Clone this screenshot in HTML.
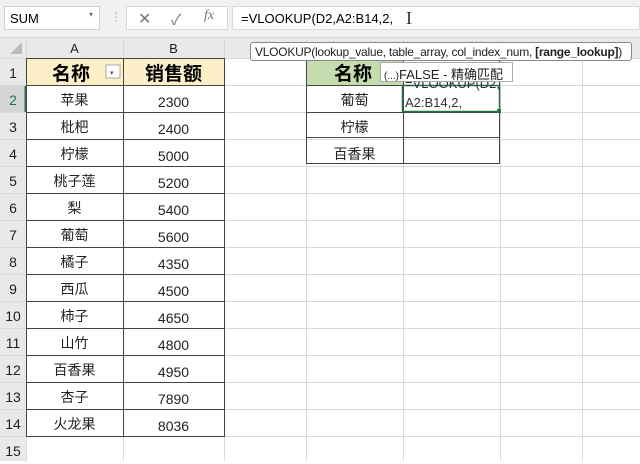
<!DOCTYPE html><html><head><style>
body{margin:0;width:640px;height:461px;overflow:hidden;background:#fff;font-family:"Liberation Sans","Noto Sans CJK SC",sans-serif;position:relative}
.a{position:absolute;box-sizing:border-box}
.c{position:absolute;box-sizing:border-box;display:flex;align-items:center;justify-content:center;font-size:14px;color:#222}
</style></head><body>
<div class="a" style="left:0;top:0;width:640px;height:38px;background:#f1f1f1;border-bottom:1px solid #d6d6d6"></div>
<div class="a" style="left:4px;top:6px;width:96px;height:24px;background:#fff;border:1px solid #d0d0d0;font-size:13px;padding:4px 5px">SUM<span style="position:absolute;right:6px;top:3px;font-size:8px;color:#777">▾</span></div>
<div class="a" style="left:110px;top:10px;color:#aaa;font-size:12px">⋮</div>
<div class="a" style="left:126px;top:6px;width:102px;height:24px;background:#fff;border:1px solid #d8d8d8"></div>
<div class="a" style="left:138px;top:9px;color:#777;font-size:16px">✕</div>
<div class="a" style="left:171px;top:9px;color:#777;font-size:15px">✓</div>
<div class="a" style="left:204px;top:8px;color:#777;font-size:14px;font-style:italic;font-family:'Liberation Serif',serif">fx</div>
<div class="a" style="left:232px;top:6px;width:408px;height:24px;background:#fff;border:1px solid #d8d8d8;font-size:13px;padding:4px 8px">=VLOOKUP(D2,A2:B14,2,</div>
<div class="a" style="left:406px;top:8px;font-size:18px;color:#333;font-family:'Liberation Serif',serif">I</div>
<svg class="a" style="left:0;top:38px" width="640" height="423">
<rect x="0" y="0" width="640" height="20" fill="#e9e9e9"/>
<rect x="0" y="0" width="26" height="423" fill="#e9e9e9"/>
<polygon points="22,4 22,16 10,16" fill="#bbb"/>
<g stroke="#d9d9d9" stroke-width="1">
<line x1="26.5" y1="0" x2="26.5" y2="423"/><line x1="123.5" y1="0" x2="123.5" y2="423"/><line x1="224.5" y1="0" x2="224.5" y2="423"/><line x1="306.5" y1="0" x2="306.5" y2="423"/><line x1="403.5" y1="0" x2="403.5" y2="423"/><line x1="500.5" y1="0" x2="500.5" y2="423"/><line x1="582.5" y1="0" x2="582.5" y2="423"/>
<line x1="0" y1="20.5" x2="640" y2="20.5"/>
<line x1="0" y1="47.5" x2="640" y2="47.5"/><line x1="0" y1="74.5" x2="640" y2="74.5"/><line x1="0" y1="101.5" x2="640" y2="101.5"/><line x1="0" y1="128.5" x2="640" y2="128.5"/><line x1="0" y1="155.5" x2="640" y2="155.5"/><line x1="0" y1="182.5" x2="640" y2="182.5"/><line x1="0" y1="209.5" x2="640" y2="209.5"/><line x1="0" y1="236.5" x2="640" y2="236.5"/><line x1="0" y1="263.5" x2="640" y2="263.5"/><line x1="0" y1="290.5" x2="640" y2="290.5"/><line x1="0" y1="317.5" x2="640" y2="317.5"/><line x1="0" y1="344.5" x2="640" y2="344.5"/><line x1="0" y1="371.5" x2="640" y2="371.5"/><line x1="0" y1="398.5" x2="640" y2="398.5"/>
</g>
<rect x="27" y="21" width="197" height="26" fill="#fdf0c8"/>
<rect x="307" y="21" width="96" height="26" fill="#c5dcae"/>
<rect x="0" y="48" width="26" height="26" fill="#d6d6d6"/>
<line x1="25.5" y1="48" x2="25.5" y2="74" stroke="#217346" stroke-width="2"/>
<g stroke="#444" fill="none" stroke-width="1">
<rect x="26.5" y="20.5" width="198" height="378"/>
<line x1="123.5" y1="20.5" x2="123.5" y2="398.5"/>
<path d="M26.5 47.5H224.5M26.5 74.5H224.5M26.5 101.5H224.5M26.5 128.5H224.5M26.5 155.5H224.5M26.5 182.5H224.5M26.5 209.5H224.5M26.5 236.5H224.5M26.5 263.5H224.5M26.5 290.5H224.5M26.5 317.5H224.5M26.5 344.5H224.5M26.5 371.5H224.5"/>
<rect x="306.5" y="20.5" width="193" height="105"/>
<path d="M403.5 20.5V125.5M306.5 47.5H499.5M306.5 74.5H499.5M306.5 99.5H499.5"/>
</g>
<rect x="402.5" y="47.5" width="97" height="26" fill="none" stroke="#217346" stroke-width="1.5"/>
<rect x="497" y="71" width="4" height="4" fill="#217346"/>
<rect x="106" y="27" width="14" height="13" fill="#fff" stroke="#aaa"/>
<text x="110" y="37" font-size="7" fill="#555">▾</text>
</svg>
<div class="c" style="left:26px;top:38px;width:97px;height:20px;font-size:13px">A</div>
<div class="c" style="left:123px;top:38px;width:101px;height:20px;font-size:13px">B</div>
<div class="c" style="left:224px;top:38px;width:82px;height:20px;font-size:13px">C</div>
<div class="c" style="left:306px;top:38px;width:97px;height:20px;font-size:13px">D</div>
<div class="c" style="left:403px;top:38px;width:97px;height:20px;font-size:13px">E</div>
<div class="c" style="left:500px;top:38px;width:82px;height:20px;font-size:13px">F</div>
<div class="c" style="left:582px;top:38px;width:58px;height:20px;font-size:13px">G</div>
<div id="rows"></div>
<div class="c" style="left:26px;top:59px;width:90px;height:27px;font-size:19px;font-weight:bold;color:#000">名称</div>
<div class="c" style="left:123px;top:59px;width:101px;height:27px;font-size:19px;font-weight:bold;color:#000">销售额</div>
<div class="c" style="left:306px;top:59px;width:90px;height:27px;font-size:19px;font-weight:bold;color:#000;justify-content:flex-start;padding-left:28px">名称</div>
<div class="c" style="left:306px;top:86px;width:97px;height:27px">葡萄</div>
<div class="c" style="left:306px;top:113px;width:97px;height:27px">柠檬</div>
<div class="c" style="left:306px;top:140px;width:97px;height:27px">百香果</div>
<div class="a" style="left:405px;top:78px;width:95px;font-size:13px;line-height:19px;color:#333;overflow:hidden;height:35px"><div style="margin-top:-4px">=VLOOKUP(D2,</div><div>A2:B14,2,</div></div>
<div class="a" style="left:380px;top:62px;width:133px;height:20px;background:#fff;border:1px solid #aaa;font-size:13px;padding:1px 3px;color:#222"><span style="font-size:10px">(...)</span>FALSE - 精确匹配</div>
<div class="a" style="left:250px;top:42px;width:382px;height:19px;background:#fff;border:1px solid #888;border-radius:3px;font-size:12px;letter-spacing:-0.25px;padding:2px 4px;color:#222;white-space:nowrap;overflow:hidden">VLOOKUP(lookup_value, table_array, col_index_num, <b>[range_lookup]</b>)</div>
<script>
var n=["苹果","枇杷","柠檬","桃子莲","梨","葡萄","橘子","西瓜","柿子","山竹","百香果","杏子","火龙果"],v=[2300,2400,5000,5200,5400,5600,4350,4500,4650,4800,4950,7890,8036],h="";
for(var i=0;i<15;i++){var t=59+27*i;h+='<div class="c" style="left:0;top:'+t+'px;width:26px;height:27px;font-size:14px;'+(i==1?'color:#217346':'')+'">'+(i+1)+'</div>';
if(i>=1&&i<=13){h+='<div class="c" style="left:26px;top:'+t+'px;width:97px;height:27px">'+n[i-1]+'</div><div class="c" style="left:123px;top:'+(t+2)+'px;width:101px;height:27px">'+v[i-1]+'</div>';}}
document.getElementById("rows").innerHTML=h;
</script>
</body></html>
